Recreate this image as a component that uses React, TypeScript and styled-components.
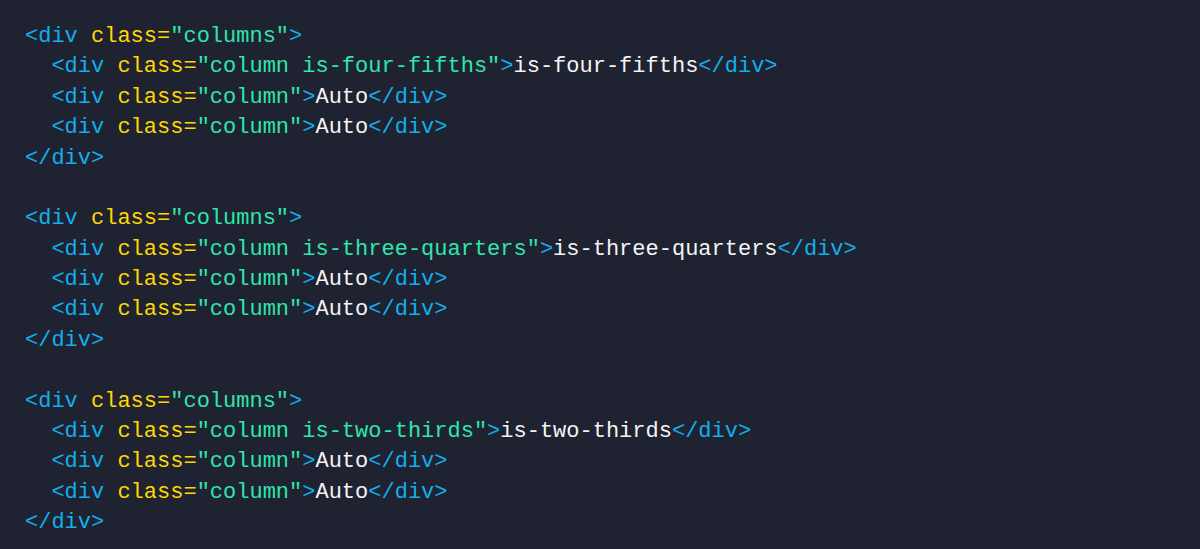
import React from "react";
import styled, { createGlobalStyle } from "styled-components";

const Global = createGlobalStyle`
  html, body { margin: 0; padding: 0; background: #1f2230; }
  #root { width: 1200px; height: 549px; }
`;

const Page = styled.div`
  width: 1200px;
  height: 549px;
  background: #1f2230;
  box-sizing: border-box;
  padding: 22px 0 0 25px;
  overflow: hidden;
`;

const Code = styled.pre`
  margin: 0;
  font-family: "Liberation Mono", "Courier New", monospace;
  font-size: 22px;
  line-height: 30.375px;
  font-weight: 400;
  color: #f2f2f2;
  white-space: pre;
`;

type Kind = "tag" | "attr" | "str" | "text";

const colors: Record<Kind, string> = {
  tag: "#12aeee",
  attr: "#ffd800",
  str: "#2ee6ac",
  text: "#f4f4f4",
};

const Tok = styled.span<{ $k: Kind }>`
  color: ${(p) => colors[p.$k]};
`;

const Line = styled.div`
  height: 30.375px;
`;

const Open = ({ cls, indent }: { cls: string; indent: boolean }) => (
  <>
    {indent ? "  " : ""}
    <Tok $k="tag">&lt;div </Tok>
    <Tok $k="attr">class=</Tok>
    <Tok $k="str">"{cls}"</Tok>
    <Tok $k="tag">&gt;</Tok>
  </>
);

const Child = ({ cls, text }: { cls: string; text: string }) => (
  <Line>
    <Open cls={cls} indent />
    <Tok $k="text">{text}</Tok>
    <Tok $k="tag">&lt;/div&gt;</Tok>
  </Line>
);

const groups = [
  ["column is-four-fifths", "is-four-fifths"],
  ["column is-three-quarters", "is-three-quarters"],
  ["column is-two-thirds", "is-two-thirds"],
];

export default function App() {
  return (
    <Page>
      <Global />
      <Code>
        {groups.map(([cls, text], i) => (
          <React.Fragment key={i}>
            {i > 0 && <Line />}
            <Line>
              <Open cls="columns" indent={false} />
            </Line>
            <Child cls={cls} text={text} />
            <Child cls="column" text="Auto" />
            <Child cls="column" text="Auto" />
            <Line>
              <Tok $k="tag">&lt;/div&gt;</Tok>
            </Line>
          </React.Fragment>
        ))}
      </Code>
    </Page>
  );
}
